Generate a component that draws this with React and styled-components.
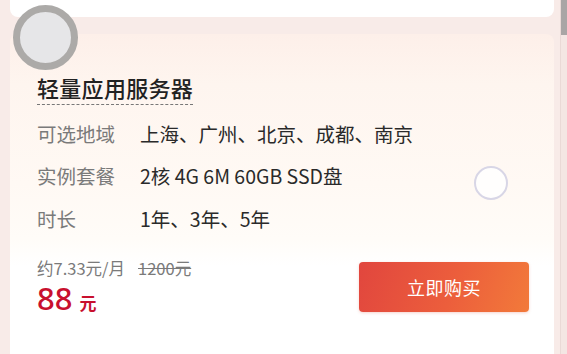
import React from "react";
import styled, { createGlobalStyle } from "styled-components";

const Global = createGlobalStyle`
  html, body { margin: 0; padding: 0; }
  body {
    background: #f8ebe8;
    font-family: "Noto Sans CJK SC", "Noto Sans", sans-serif;
    overflow: hidden;
  }
`;

const Page = styled.div`
  position: relative;
  display: flex;
  height: 354px;
  overflow: hidden;
`;

const Content = styled.div`
  flex: 1;
  display: flex;
  flex-direction: column;
  gap: 17px;
  padding: 0 6px 0 10px;
`;

const TopCard = styled.div`
  height: 17px;
  background: #fff;
  border-radius: 0 0 8px 8px;
`;

const Card = styled.div`
  flex: 1;
  border-radius: 8px 8px 0 0;
  background: linear-gradient(180deg, #fdefe9 0px, #fef5ef 50px, #fff9f4 150px, #fffcf8 205px, #ffffff 232px);
  padding: 38px 25px 0 27px;
  display: flex;
  flex-direction: column;
`;

const Title = styled.div`
  align-self: flex-start;
  font-size: 22px;
  font-weight: 500;
  color: #222;
  line-height: 30px;
  padding-bottom: 2px;
  border-bottom: 1px dashed #777;
  letter-spacing: 0.3px;
`;

const Rows = styled.div`
  margin-top: 7px;
  display: flex;
  flex-direction: column;
`;

const Row = styled.div`
  display: flex;
  align-items: center;
  height: 42.5px;
  font-size: 19.5px;
`;

const Label = styled.span`
  width: 103px;
  color: #7a7a7a;
`;

const Value = styled.span`
  color: #2a2a2a;
`;

const Bottom = styled.div`
  margin-top: 17px;
  display: flex;
  justify-content: space-between;
  align-items: flex-start;
`;

const PriceBox = styled.div`
  display: flex;
  flex-direction: column;
`;

const SubPrice = styled.div`
  font-size: 16.5px;
  color: #7a7a7a;
  line-height: 22px;
  display: flex;
  gap: 13px;
`;

const Orig = styled.span`
  text-decoration: line-through;
`;

const Price = styled.div`
  color: #c8102e;
  display: flex;
  align-items: baseline;
  gap: 7px;
`;

const Num = styled.span`
  font-family: "Noto Sans", sans-serif;
  font-size: 31px;
  font-weight: 500;
  line-height: 38px;
`;

const Unit = styled.span`
  font-size: 17px;
  font-weight: 700;
`;

const BuyButton = styled.button`
  margin-top: 5px;
  width: 170px;
  height: 50px;
  border: none;
  border-radius: 4px;
  background: linear-gradient(110deg, #e1463e 0%, #ec5e3c 55%, #f27a3a 100%);
  color: #fff;
  font-family: "Noto Sans CJK SC", sans-serif;
  font-size: 18px;
  letter-spacing: 0.5px;
  box-shadow: 0 1px 3px rgba(220, 80, 60, 0.25);
`;

const Scrollbar = styled.div`
  width: 6px;
  background: #f4e6e3;
  border-left: 1px solid #ead9d6;
  display: flex;
  flex-direction: column;
`;

const Thumb = styled.div`
  height: 35px;
  background: #a9a5a5;
`;

const GrayDot = styled.div`
  position: absolute;
  left: 13px;
  top: 5px;
  width: 51px;
  height: 51px;
  border-radius: 50%;
  border: 7px solid #acaaa8;
  background: #e6e6e8;
`;

const Radio = styled.div`
  position: absolute;
  left: 474px;
  top: 166px;
  width: 30px;
  height: 30px;
  border-radius: 50%;
  border: 2px solid #d8d6e6;
  background: #fffefd;
`;

const specs = [
  ["可选地域", "上海、广州、北京、成都、南京"],
  ["实例套餐", "2核 4G 6M 60GB SSD盘"],
  ["时长", "1年、3年、5年"],
];

export default function App() {
  return (
    <>
      <Global />
      <Page>
        <Content>
          <TopCard />
          <Card>
            <Title>轻量应用服务器</Title>
            <Rows>
              {specs.map(([l, v]) => (
                <Row key={l}>
                  <Label>{l}</Label>
                  <Value>{v}</Value>
                </Row>
              ))}
            </Rows>
            <Bottom>
              <PriceBox>
                <SubPrice>
                  <span>约7.33元/月</span>
                  <Orig>1200元</Orig>
                </SubPrice>
                <Price>
                  <Num>88</Num>
                  <Unit>元</Unit>
                </Price>
              </PriceBox>
              <BuyButton>立即购买</BuyButton>
            </Bottom>
          </Card>
        </Content>
        <Scrollbar>
          <Thumb />
        </Scrollbar>
        <GrayDot />
        <Radio />
      </Page>
    </>
  );
}
